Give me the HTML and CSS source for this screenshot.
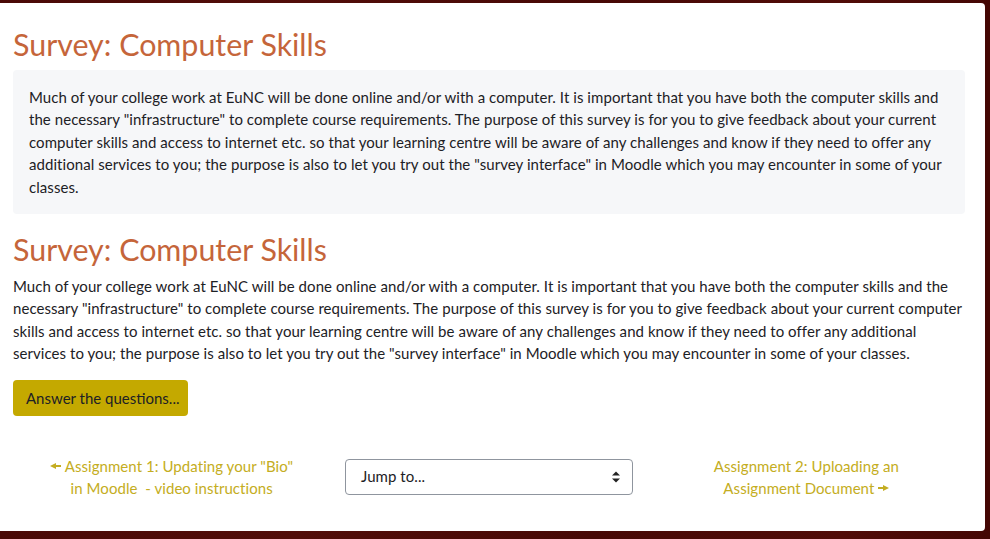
FILE: index.html
```html
<!DOCTYPE html>
<html lang="en">
<head>
<meta charset="utf-8">
<title>Survey: Computer Skills</title>
<link rel="stylesheet" href="styles.css">
</head>
<body>
<main class="card">
  <h2 class="title">Survey: Computer Skills</h2>
  <div class="intro-box">
    <p>Much of your college work at EuNC will be done online and/or with a computer. It is important that you have both the computer skills and the necessary "infrastructure" to complete course requirements. The purpose of this survey is for you to give feedback about your current computer skills and access to internet etc. so that your learning centre will be aware of any challenges and know if they need to offer any additional services to you; the purpose is also to let you try out the "survey interface" in Moodle which you may encounter in some of your classes.</p>
  </div>
  <h2 class="title title-second">Survey: Computer Skills</h2>
  <p class="desc">Much of your college work at EuNC will be done online and/or with a computer. It is important that you have both the computer skills and the necessary "infrastructure" to complete course requirements. The purpose of this survey is for you to give feedback about your current computer skills and access to internet etc. so that your learning centre will be aware of any challenges and know if they need to offer any additional services to you; the purpose is also to let you try out the "survey interface" in Moodle which you may encounter in some of your classes.</p>
  <button class="btn-answer" type="button">Answer the questions...</button>
  <nav class="activity-nav">
    <div class="nav-col">
      <a class="nav-link" href="#"><svg class="arrow" width="11" height="6" viewBox="0 0 11 6"><polygon points="0,3 6,0 6,6" fill="currentColor"/><rect x="6" y="2" width="5" height="2" fill="currentColor"/></svg> Assignment 1: Updating your "Bio"<br>in Moodle&nbsp; - video instructions</a>
    </div>
    <div class="nav-col">
      <div class="jump">
        <span>Jump to...</span>
        <svg class="updown" width="8" height="12" viewBox="0 0 8 12"><polygon points="4,0.5 8,4.5 0,4.5" fill="#222"/><polygon points="0,7.5 8,7.5 4,11.5" fill="#222"/></svg>
      </div>
    </div>
    <div class="nav-col">
      <a class="nav-link" href="#">Assignment 2: Uploading an<br>Assignment Document <svg class="arrow" width="11" height="6" viewBox="0 0 11 6"><rect x="0" y="2" width="5" height="2" fill="currentColor"/><polygon points="11,3 5,0 5,6" fill="currentColor"/></svg></a>
    </div>
  </nav>
</main>
</body>
</html>
```
FILE: styles.css
```css
html, body {
  margin: 0;
  padding: 0;
}
body {
  width: 990px;
  height: 539px;
  overflow: hidden;
  background: linear-gradient(90deg, #4a0906 0%, #520d09 30%, #470805 60%, #510c08 85%, #440704 100%);
  font-family: Lato, "Open Sans", sans-serif;
  color: #1d2125;
  font-size: 15px;
  line-height: 22.4px;
  letter-spacing: 0.06px;
}
.card {
  box-sizing: border-box;
  margin-top: 3px;
  width: 985px;
  height: 528px;
  background: #fff;
  border-radius: 0 4px 4px 0;
  padding: 23px 20px 0 13px;
}
.title {
  margin: 0 0 8px 0;
  font-weight: 400;
  font-size: 30.4px;
  line-height: 36px;
  letter-spacing: 0;
  color: #c5653a;
}
.intro-box {
  background: #f6f7f9;
  border-radius: 4px;
  padding: 16px 16px 16px 16px;
}
.intro-box p {
  margin: 0;
}
.title-second {
  margin-top: 17px;
  margin-bottom: 8px;
}
.desc {
  margin: 0 0 15px 0;
}
.btn-answer {
  display: inline-block;
  background: #c4a900;
  border: none;
  border-radius: 4px;
  font-family: inherit;
  font-size: 15px;
  letter-spacing: 0;
  line-height: 22px;
  color: #1d2125;
  padding: 7px 8px 7px 13px;
  height: 36px;
  white-space: nowrap;
  cursor: pointer;
}
.activity-nav {
  display: grid;
  grid-template-columns: repeat(3, 1fr);
  width: 952px;
  margin-top: 39px;
  align-items: center;
}
.nav-col {
  display: flex;
  justify-content: center;
}
.nav-link {
  color: #c4ad22;
  text-decoration: none;
  text-align: center;
  line-height: 22px;
}
.arrow {
  vertical-align: 3px;
}
.jump {
  box-sizing: border-box;
  width: 288px;
  height: 36px;
  border: 1px solid #8f959e;
  border-radius: 4px;
  display: flex;
  align-items: center;
  justify-content: space-between;
  padding: 0 12px 0 15px;
  color: #1d2125;
}
```
